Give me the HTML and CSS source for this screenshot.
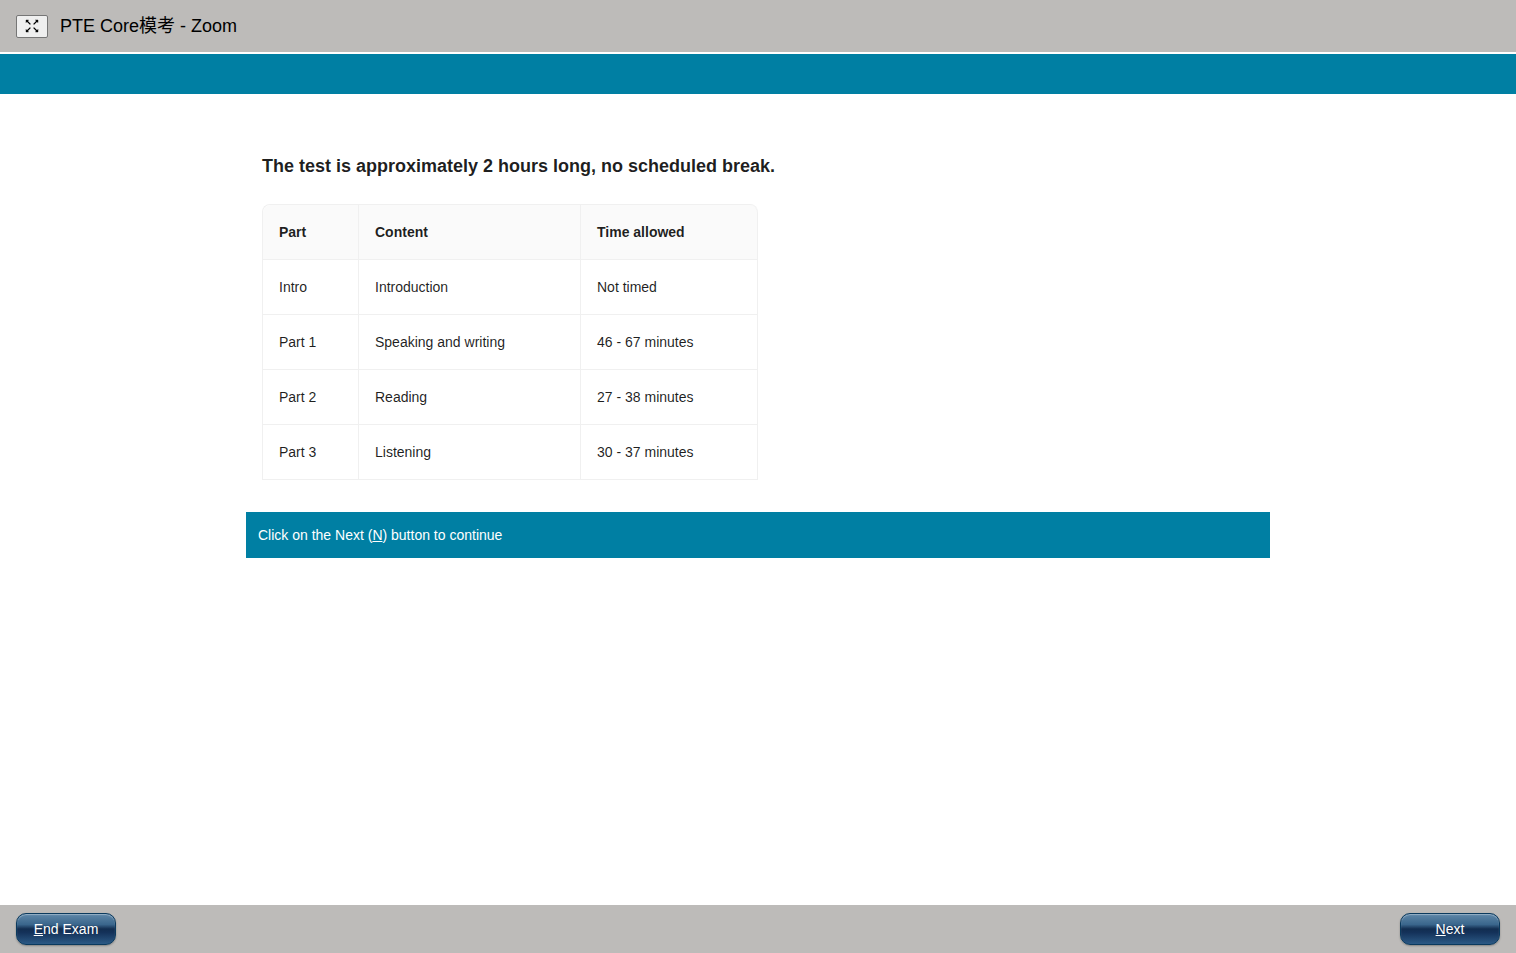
FILE: index.html
```html
<!DOCTYPE html>
<html lang="en">
<head>
    <meta charset="utf-8">
    <title>PTE Core模考 - Zoom</title>
    <link rel="stylesheet" href="styles.css">
</head>
<body>
    <header class="header">
        <button type="button" class="zoom-btn" aria-label="Toggle full screen">
            <svg width="14" height="14" viewBox="0 0 14 14" fill="#000" stroke="#000">
                <path d="M2 2l3.400 3.400M12 2L8.600 5.400M2 12l3.400-3.400M12 12L8.600 8.600" stroke-width="1.300"/>
                <path d="M1 1h2.600L1 3.600zM13 1h-2.600L13 3.600zM1 13h2.600L1 10.400zM13 13h-2.600L13 10.400z" stroke-width=".4"/>
            </svg>
        </button>
        <span class="exam-name">PTE Core模考 - Zoom</span>
    </header>
    <div class="bar"></div>

    <main class="content">
        <h1>The test is approximately 2 hours long, no scheduled break.</h1>
        <table class="parts">
            <thead>
                <tr>
                    <th class="col-part">Part</th>
                    <th class="col-content">Content</th>
                    <th class="col-time">Time allowed</th>
                </tr>
            </thead>
            <tbody>
                <tr><td>Intro</td><td>Introduction</td><td>Not timed</td></tr>
                <tr><td>Part 1</td><td>Speaking and writing</td><td>46 - 67 minutes</td></tr>
                <tr><td>Part 2</td><td>Reading</td><td>27 - 38 minutes</td></tr>
                <tr><td>Part 3</td><td>Listening</td><td>30 - 37 minutes</td></tr>
            </tbody>
        </table>
        <p class="tip">Click on the Next (<u>N</u>) button to continue</p>
    </main>

    <footer class="footer">
        <button type="button" class="btn"><u>E</u>nd Exam</button>
        <button type="button" class="btn"><u>N</u>ext</button>
    </footer>
</body>
</html>
```

FILE: styles.css
```css
* { box-sizing: border-box; }
body {
    margin: 0;
    min-height: 100vh;
    display: flex;
    flex-direction: column;
    background: #fff;
    color: rgba(0, 0, 0, 0.88);
    font-family: "Liberation Sans", Arial, "Noto Sans CJK SC", sans-serif;
    font-size: 14px;
    line-height: 22px;
}

.header {
    display: flex;
    align-items: center;
    gap: 12px;
    height: 52px;
    padding: 0 16px;
    background: #bdbbb9;
}
.zoom-btn {
    display: flex;
    align-items: center;
    justify-content: center;
    width: 32px;
    height: 23px;
    padding: 0;
    background: #efefef;
    border: 1px solid #767676;
    border-radius: 2px;
    cursor: pointer;
}
.exam-name { color: #000; font-size: 18px; line-height: 28px; }
.bar { height: 40px; margin-top: 2px; background: #007fa3; }

.content {
    flex: 1;
    width: 100%;
    max-width: 1024px;
    margin: 0 auto;
    padding: 58px 0 24px;
}
h1 { margin: 0 16px 24px; font-size: 18px; line-height: 28px; }

.parts {
    width: 496px;
    margin: 0 16px 32px;
    table-layout: fixed;
    border-collapse: separate;
    border-spacing: 0;
    border: 1px solid #f0f0f0;
    border-width: 1px 0 0 1px;
    border-radius: 8px 8px 0 0;
}
.parts th, .parts td {
    padding: 16px;
    text-align: left;
    border: 1px solid #f0f0f0;
    border-width: 0 1px 1px 0;
}
.parts th { background: #fafafa; }
.parts th:first-child { border-top-left-radius: 8px; }
.parts th:last-child { border-top-right-radius: 8px; }
.col-part { width: 96px; }
.col-content { width: 222px; }

.tip { margin: 0; padding: 12px; background: #007fa3; color: #fff; }

.footer {
    display: flex;
    align-items: center;
    justify-content: space-between;
    height: 48px;
    padding: 0 16px;
    background: #bdbbb9;
}
.btn {
    width: 100px;
    height: 32px;
    padding: 0;
    border: 1px solid #0b3a5e;
    border-radius: 10px;
    background: linear-gradient(#5f87a8 0%, #3a668c 35%, #122d50 50%, #14325a 62%, #2c5a85 100%);
    box-shadow: inset 0 1px 1px rgba(255, 255, 255, 0.35), 0 1px 2px rgba(0, 0, 0, 0.3);
    color: #fff;
    font: inherit;
    cursor: pointer;
}
.btn:hover { opacity: 0.9; }
```
